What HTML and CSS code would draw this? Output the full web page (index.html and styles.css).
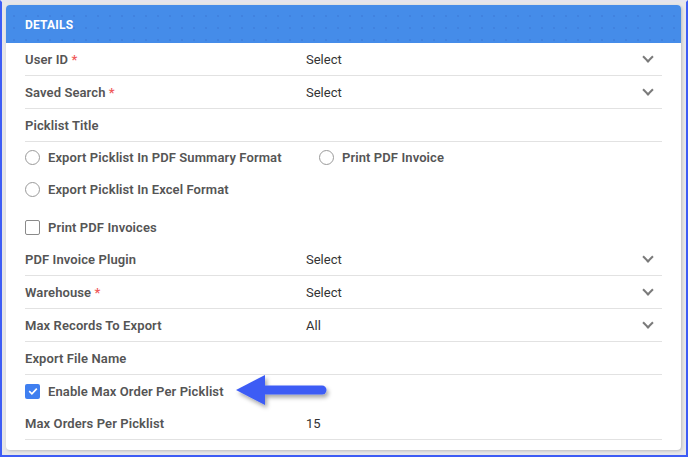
FILE: index.html
```html
<!DOCTYPE html>
<html lang="en">

<head>
  <meta charset="UTF-8">
  <meta name="viewport" content="width=device-width, initial-scale=1.0">
  <title>Details</title>
  <link rel="stylesheet" href="styles.css">
</head>

<body>
  <div class="card">
    <div class="card-head">DETAILS</div>
    <div class="card-body">
      <div class="row">
        <div class="label">User ID <span class="req">*</span></div>
        <div class="value select">Select <span class="chev"></span></div>
      </div>
      <div class="row">
        <div class="label">Saved Search <span class="req">*</span></div>
        <div class="value select">Select <span class="chev"></span></div>
      </div>
      <div class="row">
        <div class="label">Picklist Title</div>
      </div>

      <div class="radios">
        <div class="opt-line">
          <label class="opt wide"><span class="radio"></span>Export Picklist In PDF Summary Format</label>
          <label class="opt"><span class="radio"></span>Print PDF Invoice</label>
        </div>
        <div class="opt-line">
          <label class="opt"><span class="radio"></span>Export Picklist In Excel Format</label>
        </div>
      </div>
      <div class="opt-line check-line">
        <label class="opt"><span class="box"></span>Print PDF Invoices</label>
      </div>

      <div class="row">
        <div class="label">PDF Invoice Plugin</div>
        <div class="value select">Select <span class="chev"></span></div>
      </div>
      <div class="row">
        <div class="label">Warehouse <span class="req">*</span></div>
        <div class="value select">Select <span class="chev"></span></div>
      </div>
      <div class="row">
        <div class="label">Max Records To Export</div>
        <div class="value select">All <span class="chev"></span></div>
      </div>
      <div class="row">
        <div class="label">Export File Name</div>
      </div>
      <div class="opt-line">
        <label class="opt"><span class="box checked">
            <svg width="14" height="14" viewBox="0 0 14 14">
              <path d="M3.2 7.2 L5.9 9.8 L10.8 4.6" fill="none" stroke="#fff" stroke-width="1.6" />
            </svg>
          </span>Enable Max Order Per Picklist</label>
      </div>
      <div class="row">
        <div class="label">Max Orders Per Picklist</div>
        <div class="value">15</div>
      </div>
    </div>
  </div>

  <svg class="pointer" width="110" height="50" viewBox="0 0 110 50">
    <defs>
      <filter id="sh" x="-20%" y="-30%" width="140%" height="170%">
        <feDropShadow dx="2" dy="3" stdDeviation="2" flood-color="#000" flood-opacity="0.35" />
      </filter>
    </defs>
    <g filter="url(#sh)">
      <path d="M6 24 L35 9 L35 39 Z" fill="#3d5cf5" />
      <line x1="33" y1="24" x2="92" y2="24" stroke="#3d5cf5" stroke-width="9" stroke-linecap="round" />
    </g>
  </svg>
</body>

</html>
```

FILE: styles.css
```css
* {
  box-sizing: border-box;
}

html,
body {
  margin: 0;
  height: 457px;
}

body {
  position: relative;
  padding: 3px 5px 5px 4px;
  background: #e6e6e8;
  border: 2px solid #3d5cf5;
  border-top-color: #e4e4ee;
  font-family: Roboto, "Liberation Sans", sans-serif;
  font-size: 13px;
  color: #333;
}

.card {
  height: 445px;
  background: #fff;
  border-radius: 4px;
  box-shadow: 1px 1px 3px rgba(0, 0, 0, 0.18);
  overflow: hidden;
}

.card-head {
  height: 38px;
  padding: 1px 0 0 19px;
  line-height: 39px;
  background-color: #458ce9;
  background-image: radial-gradient(rgba(40, 80, 170, 0.35) 0.6px, transparent 0.8px);
  background-size: 12px 12px;
  background-position: 2px 5px;
  color: #fff;
  font-size: 12px;
  font-weight: 700;
  letter-spacing: 0.2px;
}

.card-body {
  padding: 0 19px;
}

.row {
  display: flex;
  align-items: center;
  height: 33px;
  border-bottom: 1px solid #e2e2e2;
}

.label {
  width: 281px;
  color: #555;
  font-weight: 600;
  letter-spacing: 0.1px;
}

.req {
  color: #f05a5a;
}

.value {
  flex: 1;
  display: flex;
  align-items: center;
  justify-content: space-between;
  color: #333;
}

.chev {
  width: 8px;
  height: 8px;
  margin: 0 10px 4px 0;
  border-right: 2px solid #7a7a7a;
  border-bottom: 2px solid #7a7a7a;
  transform: rotate(45deg);
}

.radios {
  margin-top: -1px;
}

.opt-line {
  display: flex;
  align-items: center;
  height: 32px;
}

.check-line {
  margin-top: 6px;
}

.opt {
  display: flex;
  align-items: center;
  color: #555;
  font-weight: 600;
  letter-spacing: 0.1px;
}

.opt.wide {
  width: 294px;
}

.radio {
  width: 15px;
  height: 15px;
  margin-right: 8px;
  border: 1.5px solid #9a9a9a;
  border-radius: 50%;
}

.box {
  width: 15px;
  height: 15px;
  margin-right: 8px;
  border: 1.5px solid #8a8a8a;
  border-radius: 2px;
}

.box.checked {
  border: none;
  background: #3f7ff0;
}

.box.checked svg {
  display: block;
  margin: 0.5px;
}

.pointer {
  position: absolute;
  left: 228px;
  top: 364px;
}
```
